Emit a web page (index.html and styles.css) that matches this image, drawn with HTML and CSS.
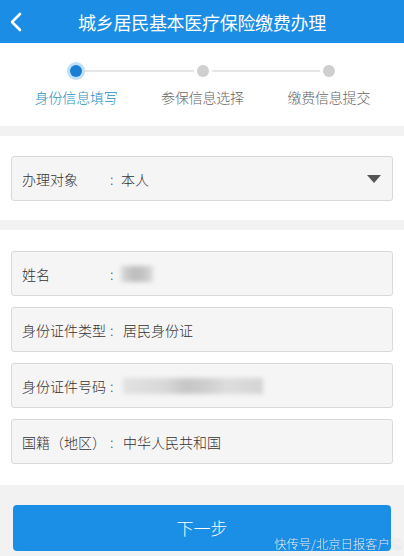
FILE: index.html
```html
<!DOCTYPE html>
<html lang="zh-CN">
<head>
    <meta charset="UTF-8">
    <meta name="viewport" content="width=device-width, initial-scale=1.0">
    <title>城乡居民基本医疗保险缴费办理</title>
    <link rel="stylesheet" href="styles.css">
</head>
<body>
    <header class="topbar">
        <span class="back">
            <svg width="14" height="20" viewBox="0 0 14 20"><path d="M11 2 L3 10 L11 18" fill="none" stroke="#fff" stroke-width="2.6" stroke-linecap="round" stroke-linejoin="round"/></svg>
        </span>
        <h1>城乡居民基本医疗保险缴费办理</h1>
        <span></span>
    </header>

    <div class="steps">
        <div class="step active first">
            <div class="dot-row"><i class="line"></i><b class="dot"></b><i class="line"></i></div>
            <span class="step-name">身份信息填写</span>
        </div>
        <div class="step">
            <div class="dot-row"><i class="line"></i><b class="dot"></b><i class="line"></i></div>
            <span class="step-name">参保信息选择</span>
        </div>
        <div class="step last">
            <div class="dot-row"><i class="line"></i><b class="dot"></b><i class="line"></i></div>
            <span class="step-name">缴费信息提交</span>
        </div>
    </div>

    <div class="section first-section">
        <div class="field select">
            <span class="label">办理对象</span>
            <span class="colon">:</span>
            <span class="value">本人</span>
            <span class="arrow"></span>
        </div>
    </div>

    <div class="section fields">
        <div class="field">
            <span class="label">姓名</span>
            <span class="colon">:</span>
            <span class="blur blur-name"></span>
        </div>
        <div class="field">
            <span class="label">身份证件类型</span>
            <span class="colon">:</span>
            <span class="value">居民身份证</span>
        </div>
        <div class="field">
            <span class="label">身份证件号码</span>
            <span class="colon">:</span>
            <span class="blur blur-id"></span>
        </div>
        <div class="field">
            <span class="label">国籍（地区）</span>
            <span class="colon">:</span>
            <span class="value">中华人民共和国</span>
        </div>
    </div>

    <div class="footer">
        <button class="next">下一步</button>
        <span class="watermark">快传号/北京日报客户端</span>
    </div>
</body>
</html>
```

FILE: styles.css
```css
body {
    margin: 0;
    width: 404px;
    height: 556px;
    overflow: hidden;
    background-color: #f2f2f2;
    font-family: "Noto Sans CJK SC", "Noto Sans", sans-serif;
    font-weight: 300;
    color: #333;
    position: relative;
}

.topbar {
    height: 43px;
    background-color: #1b8de4;
    display: grid;
    grid-template-columns: 40px 1fr 40px;
    align-items: center;
}

.back {
    padding-left: 9px;
    display: flex;
    align-items: center;
}

.topbar h1 {
    margin: 0;
    font-size: 18px;
    font-weight: 400;
    color: #fff;
    text-align: center;
    letter-spacing: -0.3px;
}

.steps {
    height: 83px;
    background-color: #fff;
    display: grid;
    grid-template-columns: repeat(3, 1fr);
    padding: 0 12px 0 13px;
}

.step {
    display: flex;
    flex-direction: column;
    align-items: center;
    padding-top: 19px;
}

.dot-row {
    width: 100%;
    height: 18px;
    display: flex;
    align-items: center;
}

.line {
    flex: 1;
    height: 2px;
    background-color: #e6e6e6;
}

.first .line:first-child,
.last .line:last-child {
    background-color: transparent;
}

.dot {
    width: 12px;
    height: 12px;
    border-radius: 50%;
    background-color: #cfcfcf;
    margin: 0 3px;
}

.active .dot {
    background-color: #1a7fd4;
    box-shadow: 0 0 0 3px #bfe0f7;
}

.step-name {
    margin-top: 7px;
    font-size: 14px;
    color: #666;
    letter-spacing: -0.2px;
}

.active .step-name {
    color: #2a8fc2;
}

.section {
    background-color: #fff;
    padding: 20px 11px 19px;
    display: flex;
    flex-direction: column;
    gap: 11px;
}

.first-section {
    margin-top: 10px;
    margin-bottom: 10px;
}

.fields {
    padding-top: 21px;
    padding-bottom: 21px;
}

.field {
    height: 43px;
    border: 1px solid #d9d9d9;
    border-radius: 3px;
    background-color: #f5f5f5;
    display: flex;
    align-items: center;
    padding: 0 10px;
    font-size: 14px;
    color: #333;
}

.label {
    width: 88px;
    white-space: nowrap;
}

.colon {
    width: 11px;
    color: #555;
}

.value {
    margin-left: 2px;
}

.select .value {
    margin-left: 0;
}

.arrow {
    margin-left: auto;
    margin-right: 1px;
    width: 0;
    height: 0;
    border-left: 7px solid transparent;
    border-right: 7px solid transparent;
    border-top: 8px solid #555;
}

.blur {
    height: 16px;
    filter: blur(2px);
}

.blur-name {
    width: 32px;
    background: linear-gradient(90deg, #dadada 0%, #bdbdbd 40%, #c4c4c4 70%, #dcdcdc 100%);
}

.blur-id {
    width: 140px;
    margin-left: 2px;
    background: linear-gradient(90deg, #e2e2e2 0%, #d8d8d8 30%, #c6c6c6 45%, #cfcfcf 60%, #dddddd 75%, #d4d4d4 100%);
}

.footer {
    padding: 20px 13px 0;
}

.next {
    width: 100%;
    height: 46px;
    border: none;
    border-radius: 4px;
    background-color: #1b8fe6;
    color: #fff;
    font-family: "Noto Sans CJK SC", sans-serif;
    font-weight: 300;
    font-size: 17px;
    padding-bottom: 2px;
}

.watermark {
    position: absolute;
    right: 2px;
    top: 535px;
    font-size: 12.3px;
    color: rgba(255, 255, 255, 0.92);
    white-space: nowrap;
    text-shadow: 0 0 1px rgba(0, 0, 0, 0.2);
}
```
